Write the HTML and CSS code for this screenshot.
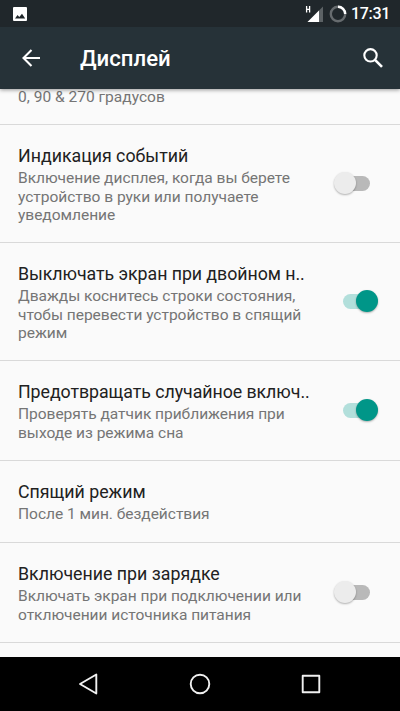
FILE: index.html
```html
<!DOCTYPE html>
<html lang="ru">
<head>
<meta charset="utf-8">
<title>Дисплей</title>
<link rel="stylesheet" href="styles.css">
</head>
<body>
<div class="screen">
  <header class="header">
    <div class="status">
      <svg class="picture" width="14" height="14" viewBox="0 0 14 14"><rect width="14" height="14" rx="1" fill="#fff"/><path d="M2 11.5 4.5 8 6.3 10 9 6.8 12.2 11.5Z" fill="#20272b"/></svg>
      <svg width="19" height="18" viewBox="0 0 19 18"><path d="M1.6 1v6.6M4.6 1v6.6M1.6 4.3h3" stroke="#fff" stroke-width="1.3" fill="none"/><path d="M18 1.5V17H2.5Z" fill="#5c6265"/><path d="M14 5.5V17H2.5Z" fill="#fff"/></svg>
      <svg class="battery" width="18" height="18" viewBox="0 0 18 18"><circle cx="9" cy="9" r="7.2" fill="none" stroke="#666b6e" stroke-width="2.4"/><path d="M9 1.8A7.2 7.2 0 0 1 16.2 9" fill="none" stroke="#fff" stroke-width="2.4"/></svg>
      <span class="time">17:31</span>
    </div>
    <div class="toolbar">
      <svg width="20" height="20" viewBox="0 0 20 20"><path d="M19 10H3M10.5 2 2.5 10l8 8" fill="none" stroke="#fff" stroke-width="2.1"/></svg>
      <h1 class="heading">Дисплей</h1>
      <svg width="22" height="22" viewBox="0 0 22 22"><circle cx="8.5" cy="8.3" r="6.2" fill="none" stroke="#fff" stroke-width="2.1"/><path d="m13 12.8 7 7" stroke="#fff" stroke-width="2.6"/></svg>
    </div>
  </header>
  <main class="list">
    <section class="row row-cut"><p class="summary">0, 90 &amp; 270 градусов</p></section>
    <section class="row row-three">
      <div class="text"><h2 class="title">Индикация событий</h2><p class="summary">Включение дисплея, когда вы берете<br>устройство в руки или получаете<br>уведомление</p></div>
      <span class="switch"></span>
    </section>
    <section class="row row-three">
      <div class="text"><h2 class="title title-long">Выключать экран при двойном н..</h2><p class="summary">Дважды коснитесь строки состояния,<br>чтобы перевести устройство в спящий<br>режим</p></div>
      <span class="switch on"></span>
    </section>
    <section class="row row-two">
      <div class="text"><h2 class="title title-long">Предотвращать случайное включ..</h2><p class="summary">Проверять датчик приближения при<br>выходе из режима сна</p></div>
      <span class="switch on"></span>
    </section>
    <section class="row row-one">
      <div class="text"><h2 class="title">Спящий режим</h2><p class="summary">После 1 мин. бездействия</p></div>
    </section>
    <section class="row row-two">
      <div class="text"><h2 class="title">Включение при зарядке</h2><p class="summary">Включать экран при подключении или<br>отключении источника питания</p></div>
      <span class="switch"></span>
    </section>
  </main>
  <nav class="nav">
    <svg width="22" height="22" viewBox="0 0 22 22"><path d="M18.3 1.5v19L2 11Z"/></svg>
    <svg width="22" height="22" viewBox="0 0 22 22"><circle cx="11" cy="11" r="9.3"/></svg>
    <svg width="22" height="22" viewBox="0 0 22 22"><rect x="2.7" y="2.7" width="16.6" height="16.6"/></svg>
  </nav>
</div>
</body>
</html>
```

FILE: styles.css
```css
* { box-sizing: border-box; margin: 0; padding: 0; }
body { font-family: Roboto, "Noto Sans", sans-serif; background: #fafafa; }
svg { display: block; flex: none; }
.screen { width: 400px; height: 711px; display: flex; flex-direction: column; overflow: hidden; }
.header { position: relative; background: #263238; box-shadow: 0 1px 4px rgba(0, 0, 0, .4); }
.status { height: 27px; display: flex; align-items: center; padding: 0 10px 0 13px; background: #20272b; }
.picture { margin-right: auto; }
.battery { margin: 0 4px 0 5px; }
.time { color: #fff; font-size: 16px; font-weight: 500; line-height: 27px; letter-spacing: -.3px; }
.toolbar { height: 62px; display: flex; align-items: center; padding: 0 16px 0 21px; }
.heading { flex: 1; margin-left: 39px; color: #fff; font-size: 22.2px; font-weight: 500; line-height: 26px; }
.list { flex: 1; min-height: 0; overflow: hidden; background: #fafafa; }
.row { display: flex; align-items: flex-start; justify-content: space-between; padding: 21px 20px 0 18px; border-bottom: 1px solid #d9d9d9; }
.row-cut { height: 36px; padding-top: 0; }
.row-cut .summary { line-height: 16px; letter-spacing: 0; }
.row-three { height: 118px; }
.row-two { height: 100px; }
.row-one { height: 82px; }
.title { color: #212121; font-size: 17.78px; font-weight: 400; line-height: 21px; margin-bottom: 2.3px; white-space: nowrap; }
.title-long { letter-spacing: -.05px; }
.summary { color: #757575; font-size: 15.56px; line-height: 18.4px; letter-spacing: -.04px; white-space: nowrap; }
.switch { position: relative; flex: none; align-self: center; width: 27px; height: 15px; margin: -22px 10px 0 0; border-radius: 8px; background: #b9b9b9; }
.switch::after { content: ""; position: absolute; left: -9px; top: -4px; width: 22px; height: 22px; border-radius: 50%; background: #ececec; box-shadow: 0 1px 2px rgba(0, 0, 0, .3); }
.switch.on { background: #b2dfdb; }
.switch.on::after { left: 13px; background: #009688; }
.nav { height: 54px; display: flex; align-items: center; justify-content: center; gap: 89px; background: #000; }
.nav svg { fill: none; stroke: #f0f0f0; stroke-width: 1.9; stroke-linejoin: round; }
```
